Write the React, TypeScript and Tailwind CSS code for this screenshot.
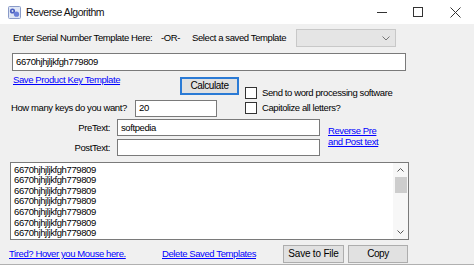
import React from "react";

const F = { fontFamily: '"Liberation Sans", Arial, sans-serif' };

function Box({ className = "" }: { className?: string }) {
  return <div className={"h-[12px] w-[12px] shrink-0 border border-[#333] bg-white " + className} />;
}

export default function App() {
  const lines = Array.from({ length: 7 }, () => "6670hjhjljkfgh779809");
  return (
    <div style={F} className="w-[474px] h-[268px] overflow-hidden bg-white text-[9.5px] tracking-[-0.4px] text-black leading-none whitespace-nowrap">
      {/* title bar */}
      <div className="h-[24px] flex items-center bg-white">
        <svg className="ml-[8px] w-[13px] h-[13px]" viewBox="0 0 13 13">
          <rect x="0.5" y="0.5" width="12" height="12" rx="1" fill="#dfe6f5" stroke="#8a9bc8" />
          <circle cx="4.5" cy="5" r="2.6" fill="#4a5fc0" />
          <circle cx="8.5" cy="8.2" r="2.6" fill="#6a7fd8" />
          <circle cx="4.5" cy="5" r="0.9" fill="#dfe6f5" />
        </svg>
        <span className="ml-[5px] text-[10.5px] tracking-[-0.45px] text-[#111]">Reverse Algorithm</span>
        <div className="ml-auto flex items-center h-full">
          <div className="w-[36px] flex justify-center"><div className="w-[10px] h-px bg-[#333]" /></div>
          <div className="w-[36px] flex justify-center"><div className="w-[10px] h-[10px] border border-[#333]" /></div>
          <div className="w-[38px] flex justify-center">
            <svg width="11" height="11" viewBox="0 0 11 11"><path d="M0.5 0.5 L10.5 10.5 M10.5 0.5 L0.5 10.5" stroke="#333" strokeWidth="1" /></svg>
          </div>
        </div>
      </div>
      {/* content */}
      <div className="h-[241px] bg-[#f0f0f0] border-b border-[#b0b0b0] flex flex-col">
        {/* row1 */}
        <div className="mt-[5px] h-[18px] flex items-center">
          <span className="w-[161px] pl-[13px]">Enter Serial Number Template Here:</span>
          <span className="w-[31px]">-OR-</span>
          <span className="w-[104px]">Select a saved Template</span>
          <div className="w-[100px] h-[18px] bg-[#e5e5e5] border border-[#c8c8c8] flex items-center justify-end pr-[5px]">
            <svg width="8" height="5" viewBox="0 0 8 5"><path d="M0.5 0.5 L4 4 L7.5 0.5" fill="none" stroke="#777" /></svg>
          </div>
        </div>
        {/* row2 */}
        <div className="mt-[6px] ml-[12px] w-[394px] h-[18px] bg-white border border-[#7a7a7a] flex items-center pl-[3px]">
          6670hjhjljkfgh779809
        </div>
        {/* row3 */}
        <div className="h-[28px] flex items-start">
          <span className="w-[180px] pl-[13px] mt-[4px] text-[#0000ff] underline">Save Product Key Template</span>
          <div className="mt-[6px] w-[59px] h-[18px] bg-[#e1e1e1] border-2 border-[#2a7ad5] flex items-center justify-center text-[10px]">
            Calculate
          </div>
          <div className="ml-[6px] mt-[16px] flex items-center">
            <Box />
            <span className="ml-[5px]">Send to word processing software</span>
          </div>
        </div>
        {/* row4 */}
        <div className="h-[18px] flex items-center">
          <span className="w-[135px] pl-[11px]">How many keys do you want?</span>
          <div className="w-[82px] h-[17px] bg-white border border-[#7a7a7a] flex items-center pl-[3px]">20</div>
          <div className="ml-[28px] flex items-center">
            <Box />
            <span className="ml-[5px]">Capitolize all letters?</span>
          </div>
        </div>
        {/* row5 */}
        <div className="mt-[2px] flex">
          <div className="w-[110px] flex flex-col items-end">
            <div className="h-[17px] flex items-center">PreText:</div>
            <div className="mt-[3px] h-[17px] flex items-center">PostText:</div>
          </div>
          <div className="ml-[7px] flex flex-col">
            <div className="w-[203px] h-[17px] bg-white border border-[#7a7a7a] flex items-center pl-[3px]">softpedia</div>
            <div className="mt-[3px] w-[203px] h-[17px] bg-white border border-[#7a7a7a]" />
          </div>
          <div className="ml-[8px] mt-[6px] flex flex-col text-[#0000ff] underline leading-[11px]">
            <span>Reverse Pre</span>
            <span>and Post text</span>
          </div>
        </div>
        {/* textarea */}
        <div className="mt-[6px] ml-[10px] w-[399px] h-[78px] bg-white border border-[#7a7a7a] flex">
          <div className="flex-1 pl-[3px] pt-[1px] flex flex-col">
            {lines.map((l, i) => (
              <div key={i} className="h-[10.6px] flex items-center">{l}</div>
            ))}
          </div>
          <div className="w-[15px] flex flex-col items-center bg-[#f7f7f7]">
            <svg className="mt-[5px]" width="7" height="4" viewBox="0 0 7 4"><path d="M0.5 3.5 L3.5 0.5 L6.5 3.5" fill="none" stroke="#555" /></svg>
            <div className="mt-[5px] w-[12px] h-[16px] bg-[#cdcdcd]" />
            <svg className="mt-auto mb-[5px]" width="7" height="4" viewBox="0 0 7 4"><path d="M0.5 0.5 L3.5 3.5 L6.5 0.5" fill="none" stroke="#555" /></svg>
          </div>
        </div>
        {/* bottom row */}
        <div className="mt-[5px] flex items-center h-[18px]">
          <span className="w-[162px] pl-[9px] text-[#0000ff] underline">Tired? Hover you Mouse here.</span>
          <span className="text-[#0000ff] underline">Delete Saved Templates</span>
          <div className="ml-auto w-[61px] h-[18px] bg-[#e1e1e1] border border-[#adadad] flex items-center justify-center text-[10px] tracking-[-0.2px]">Save to File</div>
          <div className="ml-[4px] mr-[66px] w-[60px] h-[18px] bg-[#e1e1e1] border border-[#adadad] flex items-center justify-center text-[10px]">Copy</div>
        </div>
      </div>
    </div>
  );
}
